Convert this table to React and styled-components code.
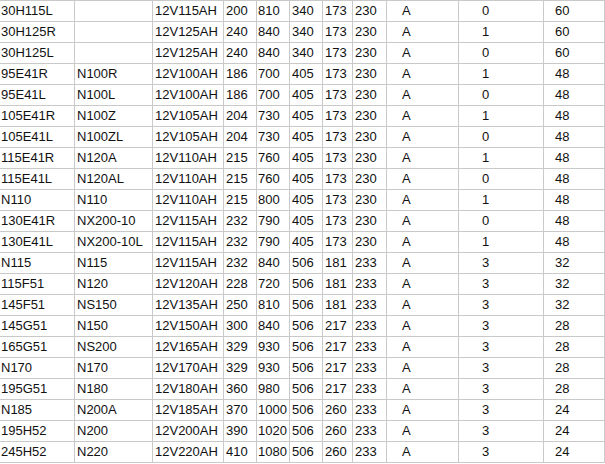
import React from "react"
import styled, { createGlobalStyle } from "styled-components"

const GlobalStyle = createGlobalStyle`
html, body {
  margin: 0;
  padding: 0;
  background: #fff;
  overflow: hidden;
}
`

const Sheet = styled.div`
display: flex;
flex-direction: column;
width: 605px;
border-top: 1px solid #c9c9c9;
font-family: "Liberation Sans", Arial, sans-serif;
font-size: 13px;
color: #111;
`

const Row = styled.div`
display: grid;
grid-template-columns: 75px 78px 71px 33px 33px 33px 30px 34px 72px 85px 1fr;
height: 21px;
`

const Cell = styled.div`
box-sizing: border-box;
height: 21px;
line-height: 20px;
padding-left: ${(props) => props.$indent}px;
border-bottom: 1px solid #c9c9c9;
border-right: 1px solid #c9c9c9;
white-space: nowrap;
overflow: hidden;
`

const indents = [1, 2, 2, 2, 1, 2, 2, 2, 15, 23, 11]

const rows = [
  ["30H115L", "", "12V115AH", "200", "810", "340", "173", "230", "A", "0", "60"],
  ["30H125R", "", "12V125AH", "240", "840", "340", "173", "230", "A", "1", "60"],
  ["30H125L", "", "12V125AH", "240", "840", "340", "173", "230", "A", "0", "60"],
  ["95E41R", "N100R", "12V100AH", "186", "700", "405", "173", "230", "A", "1", "48"],
  ["95E41L", "N100L", "12V100AH", "186", "700", "405", "173", "230", "A", "0", "48"],
  ["105E41R", "N100Z", "12V105AH", "204", "730", "405", "173", "230", "A", "1", "48"],
  ["105E41L", "N100ZL", "12V105AH", "204", "730", "405", "173", "230", "A", "0", "48"],
  ["115E41R", "N120A", "12V110AH", "215", "760", "405", "173", "230", "A", "1", "48"],
  ["115E41L", "N120AL", "12V110AH", "215", "760", "405", "173", "230", "A", "0", "48"],
  ["N110", "N110", "12V110AH", "215", "800", "405", "173", "230", "A", "1", "48"],
  ["130E41R", "NX200-10", "12V115AH", "232", "790", "405", "173", "230", "A", "0", "48"],
  ["130E41L", "NX200-10L", "12V115AH", "232", "790", "405", "173", "230", "A", "1", "48"],
  ["N115", "N115", "12V115AH", "232", "840", "506", "181", "233", "A", "3", "32"],
  ["115F51", "N120", "12V120AH", "228", "720", "506", "181", "233", "A", "3", "32"],
  ["145F51", "NS150", "12V135AH", "250", "810", "506", "181", "233", "A", "3", "32"],
  ["145G51", "N150", "12V150AH", "300", "840", "506", "217", "233", "A", "3", "28"],
  ["165G51", "NS200", "12V165AH", "329", "930", "506", "217", "233", "A", "3", "28"],
  ["N170", "N170", "12V170AH", "329", "930", "506", "217", "233", "A", "3", "28"],
  ["195G51", "N180", "12V180AH", "360", "980", "506", "217", "233", "A", "3", "28"],
  ["N185", "N200A", "12V185AH", "370", "1000", "506", "260", "233", "A", "3", "24"],
  ["195H52", "N200", "12V200AH", "390", "1020", "506", "260", "233", "A", "3", "24"],
  ["245H52", "N220", "12V220AH", "410", "1080", "506", "260", "233", "A", "3", "24"],
]

const App = () => {
  return (
    <>
      <GlobalStyle />
      <Sheet>
        {rows.map((row, i) => (
          <Row key={i}>
            {row.map((value, j) => (
              <Cell key={j} $indent={indents[j]}>{value}</Cell>
            ))}
          </Row>
        ))}
      </Sheet>
    </>
  )
}

export default App
